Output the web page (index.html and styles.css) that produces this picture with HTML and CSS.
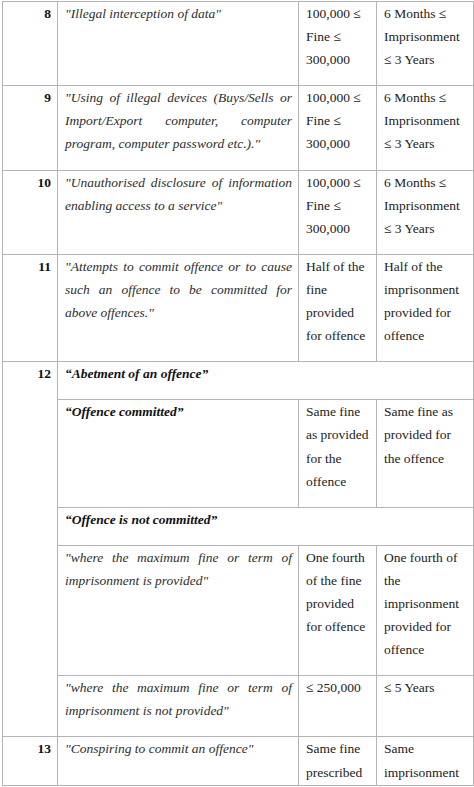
FILE: index.html
```html
<!DOCTYPE html>
<html>
<head>
<meta charset="utf-8">
<link rel="stylesheet" href="styles.css">
</head>
<body>
<table class="offences">
  <colgroup>
    <col class="c-no">
    <col class="c-desc">
    <col class="c-fine">
    <col class="c-prison">
  </colgroup>
  <tr>
    <td class="no">8</td>
    <td class="desc">"Illegal interception of data"</td>
    <td>100,000 ≤ Fine ≤ 300,000</td>
    <td>6 Months ≤ Imprisonment ≤ 3 Years</td>
  </tr>
  <tr>
    <td class="no">9</td>
    <td class="desc">"Using of illegal devices (Buys/Sells or Import/Export computer, computer program, computer password etc.)."</td>
    <td>100,000 ≤ Fine ≤ 300,000</td>
    <td>6 Months ≤ Imprisonment ≤ 3 Years</td>
  </tr>
  <tr>
    <td class="no">10</td>
    <td class="desc">"Unauthorised disclosure of information enabling access to a service"</td>
    <td>100,000 ≤ Fine ≤ 300,000</td>
    <td>6 Months ≤ Imprisonment ≤ 3 Years</td>
  </tr>
  <tr>
    <td class="no">11</td>
    <td class="desc">"Attempts to commit offence or to cause such an offence to be committed for above offences."</td>
    <td>Half of the fine provided for offence</td>
    <td>Half of the imprisonment provided for offence</td>
  </tr>
  <tr>
    <td class="no" rowspan="5">12</td>
    <td class="desc head" colspan="3">“Abetment of an offence”</td>
  </tr>
  <tr>
    <td class="desc head">“Offence committed”</td>
    <td>Same fine as provided for the offence</td>
    <td>Same fine as provided for the offence</td>
  </tr>
  <tr>
    <td class="desc head" colspan="3">“Offence is not committed”</td>
  </tr>
  <tr>
    <td class="desc">"where the maximum fine or term of imprisonment is provided"</td>
    <td>One fourth of the fine provided for offence</td>
    <td>One fourth of the imprisonment provided for offence</td>
  </tr>
  <tr>
    <td class="desc">"where the maximum fine or term of imprisonment is not provided"</td>
    <td>≤ 250,000</td>
    <td>≤ 5 Years</td>
  </tr>
  <tr class="cut">
    <td class="no">13</td>
    <td class="desc">"Conspiring to commit an offence"</td>
    <td>Same fine prescribed</td>
    <td>Same imprisonment</td>
  </tr>
</table>
</body>
</html>
```
FILE: styles.css
```css
html, body {
  margin: 0;
  padding: 0;
  background: #ffffff;
}

body {
  padding: 1px 0 0 2px;
  font-family: "Times New Roman", Times, Tinos, "Liberation Serif", "Nimbus Roman", FreeSerif, "DejaVu Serif", serif;
  font-size: 13.5px;
  line-height: 23.1px;
  color: #222222;
}

.offences {
  border-collapse: collapse;
  table-layout: fixed;
  width: 471px;
  font-family: inherit;
}

.c-no { width: 55px; }
.c-desc { width: 241px; }
.c-fine { width: 78px; }
.c-prison { width: 97px; }

.offences td {
  border: 1px solid #b4b4b4;
  vertical-align: top;
  padding: 0 6px 14px 7px;
  text-align: left;
  font-family: inherit;
}

.offences td.no {
  text-align: right;
  font-weight: bold;
  color: #111;
}

.offences td.desc {
  font-style: italic;
  text-align: justify;
  color: #2e2e2e;
}

.offences td.head {
  font-weight: bold;
  color: #111;
}

.offences tr.cut td {
  padding-bottom: 1px;
}
```
